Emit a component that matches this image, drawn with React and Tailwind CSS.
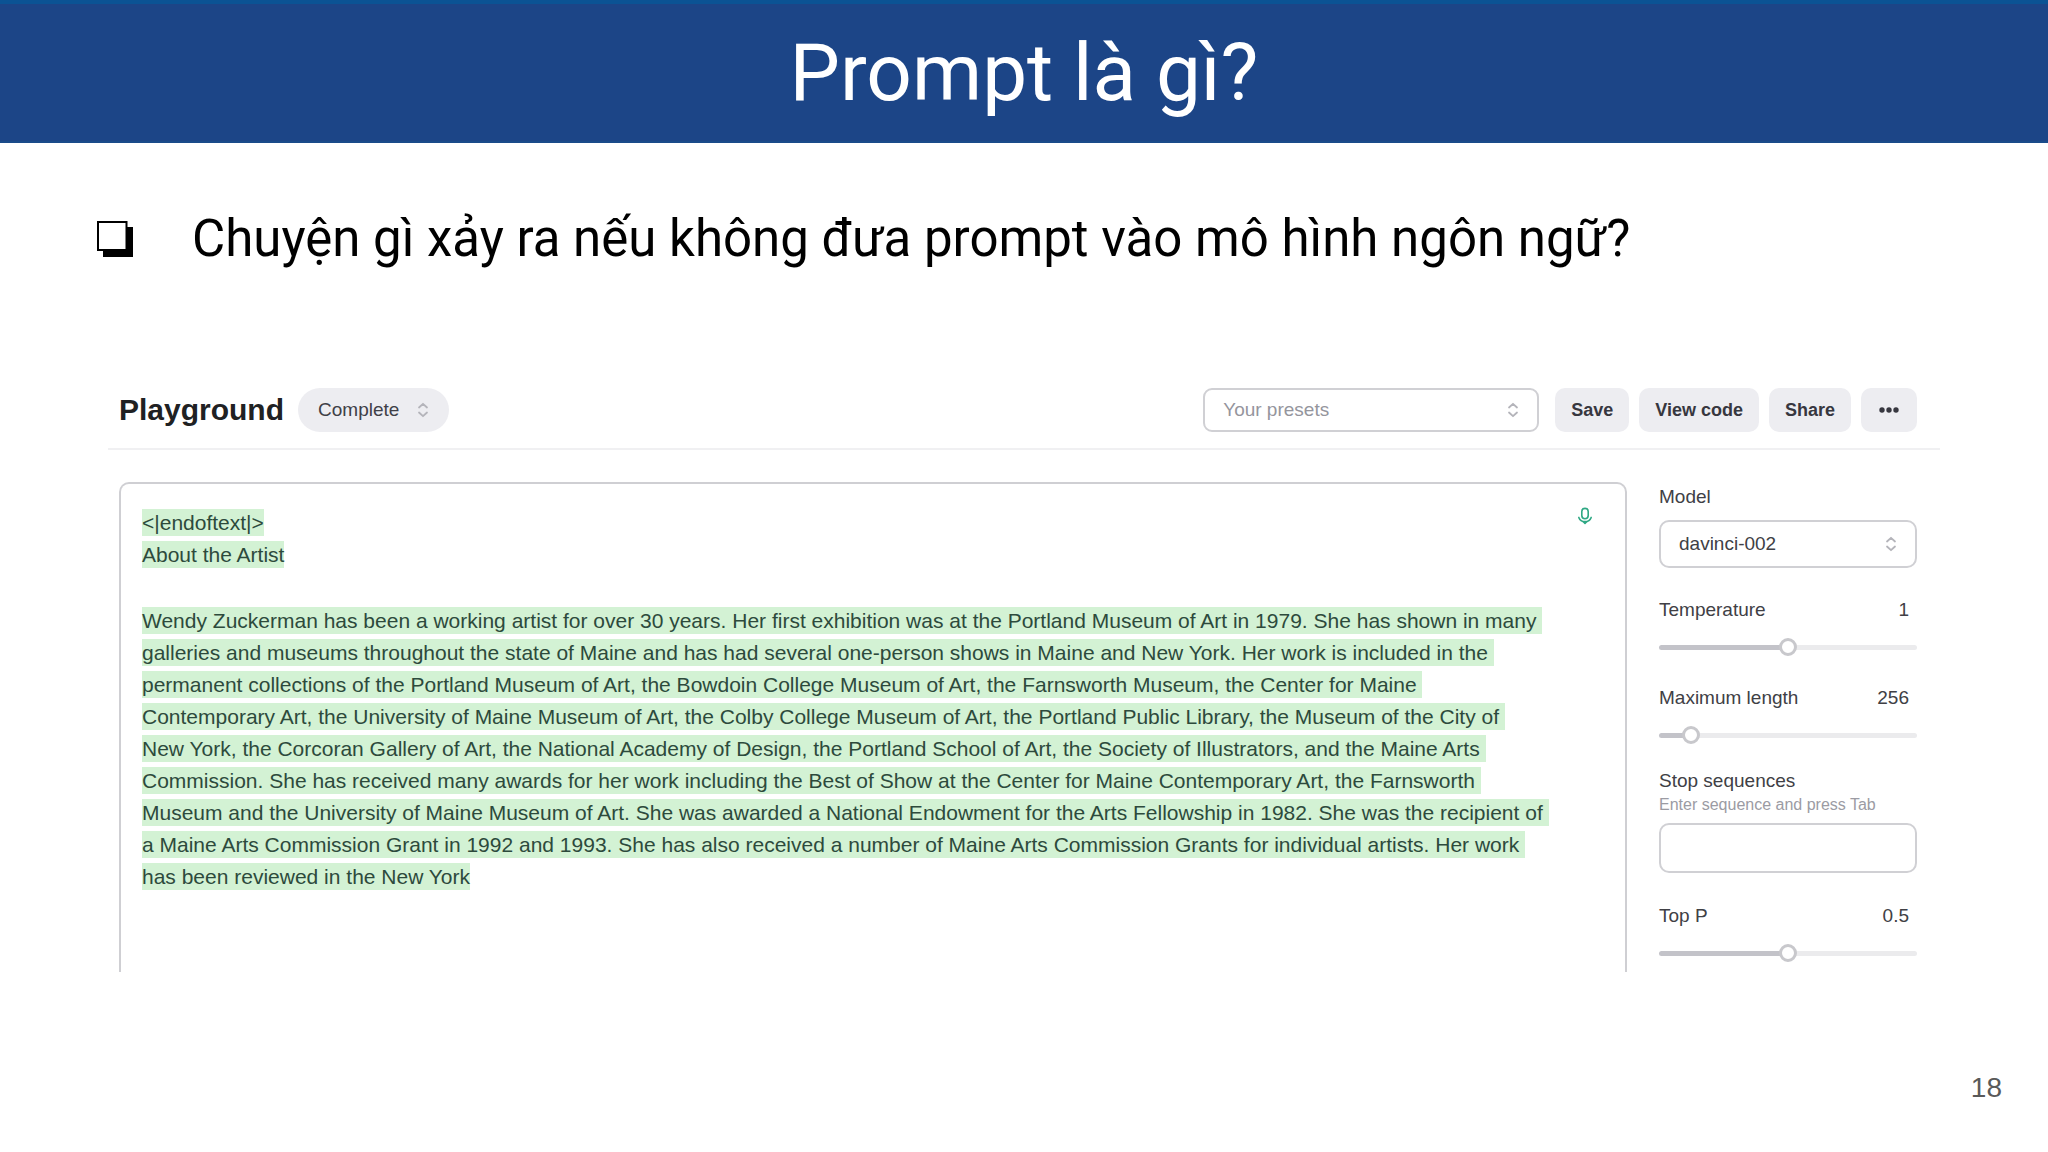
import { useState } from "react";

const GENERATED_LINES = [
  "Wendy Zuckerman has been a working artist for over 30 years. Her first exhibition was at the Portland Museum of Art in 1979. She has shown in many",
  "galleries and museums throughout the state of Maine and has had several one-person shows in Maine and New York. Her work is included in the",
  "permanent collections of the Portland Museum of Art, the Bowdoin College Museum of Art, the Farnsworth Museum, the Center for Maine",
  "Contemporary Art, the University of Maine Museum of Art, the Colby College Museum of Art, the Portland Public Library, the Museum of the City of",
  "New York, the Corcoran Gallery of Art, the National Academy of Design, the Portland School of Art, the Society of Illustrators, and the Maine Arts",
  "Commission. She has received many awards for her work including the Best of Show at the Center for Maine Contemporary Art, the Farnsworth",
  "Museum and the University of Maine Museum of Art. She was awarded a National Endowment for the Arts Fellowship in 1982. She was the recipient of",
  "a Maine Arts Commission Grant in 1992 and 1993. She has also received a number of Maine Arts Commission Grants for individual artists. Her work",
  "has been reviewed in the New York",
];

function UpDown({ className }) {
  return (
    <svg className={className} width="12" height="16" viewBox="0 0 12 16" fill="none" stroke="#b4b4ba" strokeWidth="1.8" strokeLinecap="round" strokeLinejoin="round" aria-hidden="true">
      <path d="M2 5.5 6 1.8l4 3.7M2 10.5l4 3.7 4-3.7" />
    </svg>
  );
}

function MicIcon() {
  return (
    <svg width="16" height="18" viewBox="0 0 16 18" fill="none" stroke="#2fa884" strokeWidth="1.6" strokeLinecap="round" strokeLinejoin="round" aria-hidden="true">
      <rect x="4.8" y="1.4" width="6.4" height="10.4" rx="3.2" />
      <path d="M1.8 10.4c1 2.8 3.4 4.2 6.2 4.2s5.2-1.4 6.2-4.2" />
      <path d="M6.6 15h2.8L8 16.4z" fill="#2fa884" />
    </svg>
  );
}

function Picker({ id, label, className, selectClass, iconClass, children }) {
  return (
    <div className={`relative flex items-center ${className}`}>
      <select id={id} aria-label={label} className={`w-full appearance-none border-[#d0d0d4] outline-none ${selectClass}`}>
        {children}
      </select>
      <UpDown className={`pointer-events-none absolute ${iconClass}`} />
    </div>
  );
}

function SliderField({ id, label, initial, min, max, step }) {
  const [value, setValue] = useState(initial);
  const percent = ((value - min) / (max - min)) * 100;
  return (
    <div>
      <div className="flex justify-between pr-2 leading-6">
        <label htmlFor={id}>{label}</label>
        <output htmlFor={id}>{value}</output>
      </div>
      <div className="mt-4 flex h-[18px] items-center">
        <input
          id={id}
          type="range"
          min={min}
          max={max}
          step={step}
          value={value}
          onChange={(e) => setValue(Number(e.target.value))}
          style={{ backgroundImage: `linear-gradient(to right, #c3c3c9 ${percent}%, #ebebed ${percent}%)` }}
          className="m-0 h-[5px] w-full appearance-none rounded-sm outline-none [&::-webkit-slider-thumb]:size-[18px] [&::-webkit-slider-thumb]:appearance-none [&::-webkit-slider-thumb]:rounded-full [&::-webkit-slider-thumb]:border-[3px] [&::-webkit-slider-thumb]:border-[#c8c8cc] [&::-webkit-slider-thumb]:bg-white"
        />
      </div>
    </div>
  );
}

const toolButton = "h-[44px] rounded-[10px] bg-[#ededf1] px-4 text-[18px] font-bold text-[#37373f]";
const mark = "bg-[#d3f2d4] py-[2px] whitespace-pre";

export default function App() {
  return (
    <div className="flex min-h-screen flex-col bg-white font-['Liberation_Sans',Arial,sans-serif]">
      <header className="flex h-[143px] items-center justify-center border-t-4 border-b-2 border-t-[#0b5394] border-b-[#1a4b8a] bg-[#1c4587]">
        <h1 className="font-['Roboto',sans-serif] text-[80px] leading-[96px] text-white">Prompt là gì?</h1>
      </header>

      <main className="pr-[108px] pl-[97px] pt-[64px]">
        <div className="flex items-center">
          <svg width="36" height="36" viewBox="0 0 36 36" className="shrink-0" aria-hidden="true">
            <path d="M6 6h30v30H6z" fill="#000" />
            <path d="M1 1h28.5v28H1z" fill="#fff" stroke="#000" strokeWidth="2" />
          </svg>
          <p className="ml-[59px] font-['Roboto',sans-serif] text-[51px] leading-[64px] text-black">
            Chuyện gì xảy ra nếu không đưa prompt vào mô hình ngôn ngữ?
          </p>
        </div>

        <section className="ml-[11px] mt-[117px]">
          <div className="flex items-center border-b-2 border-[#f0f0f2] pb-4 pl-[11px] pr-[23px]">
            <h2 className="text-[30px] leading-[44px] font-bold text-[#202123]">Playground</h2>
            <Picker
              label="Mode"
              className="ml-[14px] w-[151px]"
              selectClass="h-[44px] rounded-full bg-[#ededf1] pl-5 text-[19px] text-[#404047]"
              iconClass="right-5"
            >
              <option>Complete</option>
            </Picker>
            <div className="ml-auto flex items-center gap-[10px]">
              <Picker
                label="Your presets"
                className="mr-[6px] w-[336px]"
                selectClass="h-[44px] rounded-[9px] border-2 bg-white pl-[18px] text-[19px] text-[#95959d]"
                iconClass="right-5"
              >
                <option>Your presets</option>
              </Picker>
              <button type="button" className={toolButton}>Save</button>
              <button type="button" className={toolButton}>View code</button>
              <button type="button" className={toolButton}>Share</button>
              <button type="button" aria-label="More" className={toolButton}>
                <svg width="24" height="8" viewBox="0 0 24 8" fill="#37373f" aria-hidden="true">
                  <circle cx="5" cy="4" r="2.7" />
                  <circle cx="12" cy="4" r="2.7" />
                  <circle cx="19" cy="4" r="2.7" />
                </svg>
              </button>
            </div>
          </div>

          <div className="flex pl-[11px] pr-[23px] pt-8">
            <div className="relative flex-1 rounded-t-[10px] border-x-2 border-t-2 border-[#cfcfd3] pl-[21px] pt-[23px] text-[21px] leading-8 whitespace-nowrap text-[#2d4a3c]">
              <div role="textbox" aria-multiline="true" aria-label="Prompt">
                <p>
                  <span className={mark}>{"<|endoftext|>"}</span>
                  <br />
                  <span className={mark}>About the Artist</span>
                </p>
                <p className="mt-[34px]">
                  {GENERATED_LINES.map((line, i) => (
                    <span key={line} className="block">
                      <span className={mark}>{i < GENERATED_LINES.length - 1 ? line + " " : line}</span>
                    </span>
                  ))}
                </p>
              </div>
              <button type="button" aria-label="Dictate" className="absolute right-[32px] top-[23px]">
                <MicIcon />
              </button>
            </div>

            <form className="ml-8 w-[258px] pb-[10px] pt-[3px] text-[19px] text-[#404045]">
              <label htmlFor="model" className="block leading-6">Model</label>
              <Picker
                id="model"
                className="mt-[11px]"
                selectClass="h-[48px] rounded-[10px] border-2 bg-white pl-[18px] text-[19px] text-[#404045]"
                iconClass="right-5"
              >
                <option>davinci-002</option>
              </Picker>
              <div className="mt-[30px] flex flex-col gap-[30px]">
                <SliderField id="temperature" label="Temperature" initial={1} min={0} max={2} step={0.01} />
                <SliderField id="max-length" label="Maximum length" initial={256} min={0} max={2660} step={1} />
              </div>
              <label htmlFor="stop" className="mt-[25px] block leading-6">Stop sequences</label>
              <p id="stop-hint" className="text-[16px] leading-6 text-[#9b9ba3]">Enter sequence and press Tab</p>
              <input
                id="stop"
                type="text"
                aria-describedby="stop-hint"
                className="mt-[6px] mb-[31px] block h-[50px] w-full rounded-[10px] border-2 border-[#d0d0d4] px-4 outline-none"
              />
              <SliderField id="top-p" label="Top P" initial={0.5} min={0} max={1} step={0.01} />
            </form>
          </div>
        </section>
      </main>

      <footer className="mt-auto pr-[46px] pb-[48px] text-right text-[28px] leading-8 text-[#595959]">18</footer>
    </div>
  );
}
